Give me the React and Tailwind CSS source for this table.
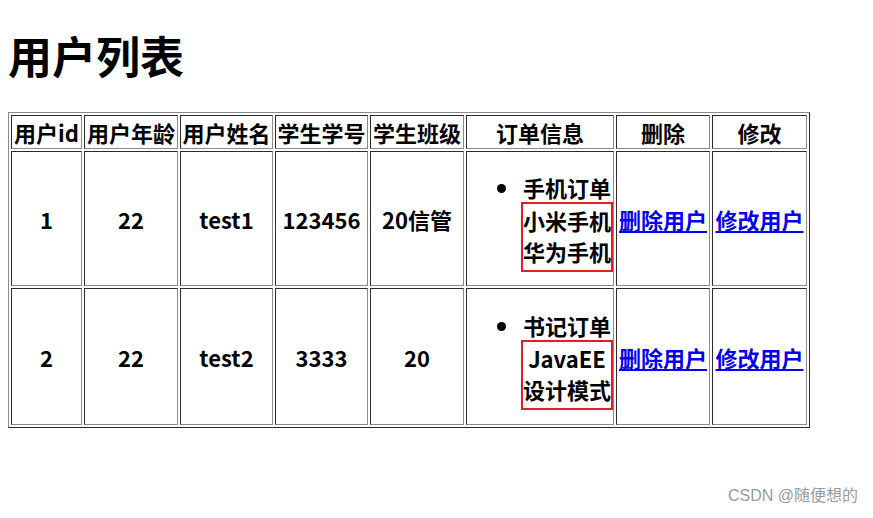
const users = [
  { id: 1, age: 22, name: 'test1', no: '123456', cls: '20信管', order: '手机订单', items: ['小米手机', '华为手机'] },
  { id: 2, age: 22, name: 'test2', no: '3333', cls: '20', order: '书记订单', items: ['JavaEE', '设计模式'] },
]

const heads = ['用户id', '用户年龄', '用户姓名', '学生学号', '学生班级', '订单信息', '删除', '修改']
const widths = ['w-[71px]', 'w-[94px]', 'w-[93px]', 'w-[93px]', 'w-[94px]', 'w-[148px]', 'w-[94px]', 'w-[95px]']

const cell = 'border border-t-[#2b2b2b] border-l-[#2b2b2b] border-b-[#8a8a8a] border-r-[#8a8a8a] p-px text-center align-middle whitespace-nowrap'

export default function App() {
  return (
    <div
      className="relative min-h-[518px] bg-white pl-[8px] pt-[34px] font-bold text-black"
      style={{ fontFamily: '"Noto Sans CJK SC", "Noto Sans", sans-serif' }}
    >
      <h1 className="text-[44px] leading-[43px] font-bold">用户列表</h1>

      <table className="mt-[35px] w-[802px] table-fixed border-separate border-spacing-[2px] border border-t-[#8a8a8a] border-l-[#8a8a8a] border-b-[#2b2b2b] border-r-[#2b2b2b] text-[22px] leading-[30px]">
        <thead>
          <tr>
            {heads.map((h, i) => (
              <th key={h} className={`${cell} ${widths[i]} h-[34px] font-bold`}>
                {h}
              </th>
            ))}
          </tr>
        </thead>
        <tbody>
          {users.map((u, r) => (
            <tr key={u.id}>
              <td className={`${cell} ${r === 0 ? 'h-[135px]' : 'h-[137px]'}`}>{u.id}</td>
              <td className={cell}>{u.age}</td>
              <td className={cell}>{u.name}</td>
              <td className={cell}>{u.no}</td>
              <td className={cell}>{u.cls}</td>
              <td className={cell}>
                <ul className="list-disc pl-[53px] pt-[6px]">
                  <li className="w-[92px]">
                    {u.order}
                    <div className="w-[92px] border-2 border-[#e21f26] pt-[1px] pb-[3px] leading-[31px]">
                      {u.items.map((it) => (
                        <div key={it}>{it}</div>
                      ))}
                    </div>
                  </li>
                </ul>
              </td>
              <td className={cell}>
                <a href="#" className="text-[#0000ee] underline">删除用户</a>
              </td>
              <td className={cell}>
                <a href="#" className="text-[#0000ee] underline">修改用户</a>
              </td>
            </tr>
          ))}
        </tbody>
      </table>

      <div
        className="absolute right-[15px] bottom-[10px] text-[16px] font-normal text-[#9a9a9a]"
        style={{ fontFamily: '"Liberation Sans", "Noto Sans CJK SC", sans-serif' }}
      >
        CSDN @随便想的
      </div>
    </div>
  )
}
